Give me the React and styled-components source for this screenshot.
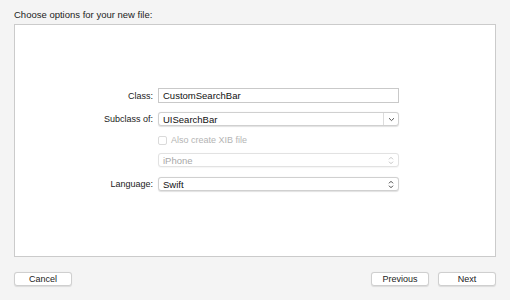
import styled, { createGlobalStyle } from "styled-components";

const GlobalStyle = createGlobalStyle`
  html, body {
    margin: 0;
    padding: 0;
    background: #f4f4f4;
  }
  body {
    font-family: "Liberation Sans", Arial, sans-serif;
    color: #222;
  }
`;

const Window = styled.div`
  width: 510px;
  height: 300px;
  box-sizing: border-box;
  padding: 0 14px;
  display: flex;
  flex-direction: column;
`;

const Heading = styled.div`
  font-size: 9.5px;
  height: 24px;
  line-height: 10px;
  padding-top: 10px;
  box-sizing: border-box;
  color: #222;
`;

const Panel = styled.div`
  height: 233px;
  box-sizing: border-box;
  background: #fff;
  border: 1px solid #cbcbcb;
  padding-top: 63px;
`;

const Form = styled.div`
  display: grid;
  grid-template-columns: 138px 241px;
  column-gap: 5px;
  align-items: center;
`;

const Label = styled.div`
  font-size: 9px;
  text-align: right;
  color: #222;
  margin-top: ${(p) => p.$top || 0}px;
`;

const Cell = styled.div`
  margin-top: ${(p) => p.$top || 0}px;
`;

const TextField = styled.div`
  height: 15px;
  box-sizing: border-box;
  border: 1px solid #c9c9c9;
  background: #fff;
  font-size: 9.5px;
  line-height: 13px;
  padding-left: 4px;
  color: #111;
`;

const Popup = styled.div`
  height: 14px;
  box-sizing: border-box;
  border: 1px solid ${(p) => (p.$disabled ? "#e2e2e2" : "#d0d0d0")};
  border-radius: 3px;
  background: #fff;
  box-shadow: 0 0.5px 1px rgba(0, 0, 0, ${(p) => (p.$disabled ? 0.04 : 0.12)});
  display: flex;
  align-items: center;
  font-size: 9.5px;
  color: ${(p) => (p.$disabled ? "#a8a8a8" : "#111")};
`;

const PopupText = styled.span`
  flex: 1;
  padding-left: 4px;
`;

const Arrow = styled.span`
  width: 14px;
  height: 100%;
  display: flex;
  align-items: center;
  justify-content: center;
  border-left: ${(p) => (p.$divided ? "1px solid #dcdcdc" : "none")};
`;

const CheckRow = styled.div`
  display: flex;
  align-items: center;
  gap: 4px;
  height: 10px;
  font-size: 9px;
  color: #b4b4b4;
`;

const Checkbox = styled.span`
  width: 9px;
  height: 9px;
  box-sizing: border-box;
  border: 1px solid #dadada;
  border-radius: 2px;
  background: #fff;
`;

const Footer = styled.div`
  display: flex;
  align-items: center;
  padding-top: 15px;
`;

const Spacer = styled.div`
  flex: 1;
`;

const Button = styled.div`
  width: 58px;
  height: 14px;
  box-sizing: border-box;
  border: 1px solid #cfcfcf;
  border-radius: 3px;
  background: #fff;
  box-shadow: 0 0.5px 1px rgba(0, 0, 0, 0.1);
  font-size: 9px;
  line-height: 12px;
  text-align: center;
  color: #222;
  margin-left: ${(p) => p.$gap || 0}px;
`;

const Chevron = () => (
  <svg width="7" height="5" viewBox="0 0 7 5">
    <path d="M1 1.2 L3.5 3.6 L6 1.2" fill="none" stroke="#555" strokeWidth="1" />
  </svg>
);

const UpDown = ({ color }) => (
  <svg width="6" height="9" viewBox="0 0 6 9">
    <path d="M1 3.3 L3 1.3 L5 3.3 M1 5.7 L3 7.7 L5 5.7" fill="none" stroke={color} strokeWidth="1" />
  </svg>
);

const App = () => {
  return (
    <Window>
      <GlobalStyle />
      <Heading>Choose options for your new file:</Heading>
      <Panel>
        <Form>
          <Label>Class:</Label>
          <Cell>
            <TextField>CustomSearchBar</TextField>
          </Cell>

          <Label $top={9}>Subclass of:</Label>
          <Cell $top={9}>
            <Popup>
              <PopupText>UISearchBar</PopupText>
              <Arrow $divided>
                <Chevron />
              </Arrow>
            </Popup>
          </Cell>

          <Label $top={9} />
          <Cell $top={9}>
            <CheckRow>
              <Checkbox />
              Also create XIB file
            </CheckRow>
          </Cell>

          <Label $top={8} />
          <Cell $top={8}>
            <Popup $disabled>
              <PopupText>iPhone</PopupText>
              <Arrow>
                <UpDown color="#c4c4c4" />
              </Arrow>
            </Popup>
          </Cell>

          <Label $top={10}>Language:</Label>
          <Cell $top={10}>
            <Popup>
              <PopupText>Swift</PopupText>
              <Arrow>
                <UpDown color="#444" />
              </Arrow>
            </Popup>
          </Cell>
        </Form>
      </Panel>
      <Footer>
        <Button>Cancel</Button>
        <Spacer />
        <Button>Previous</Button>
        <Button $gap={9}>Next</Button>
      </Footer>
    </Window>
  );
};

export default App;
